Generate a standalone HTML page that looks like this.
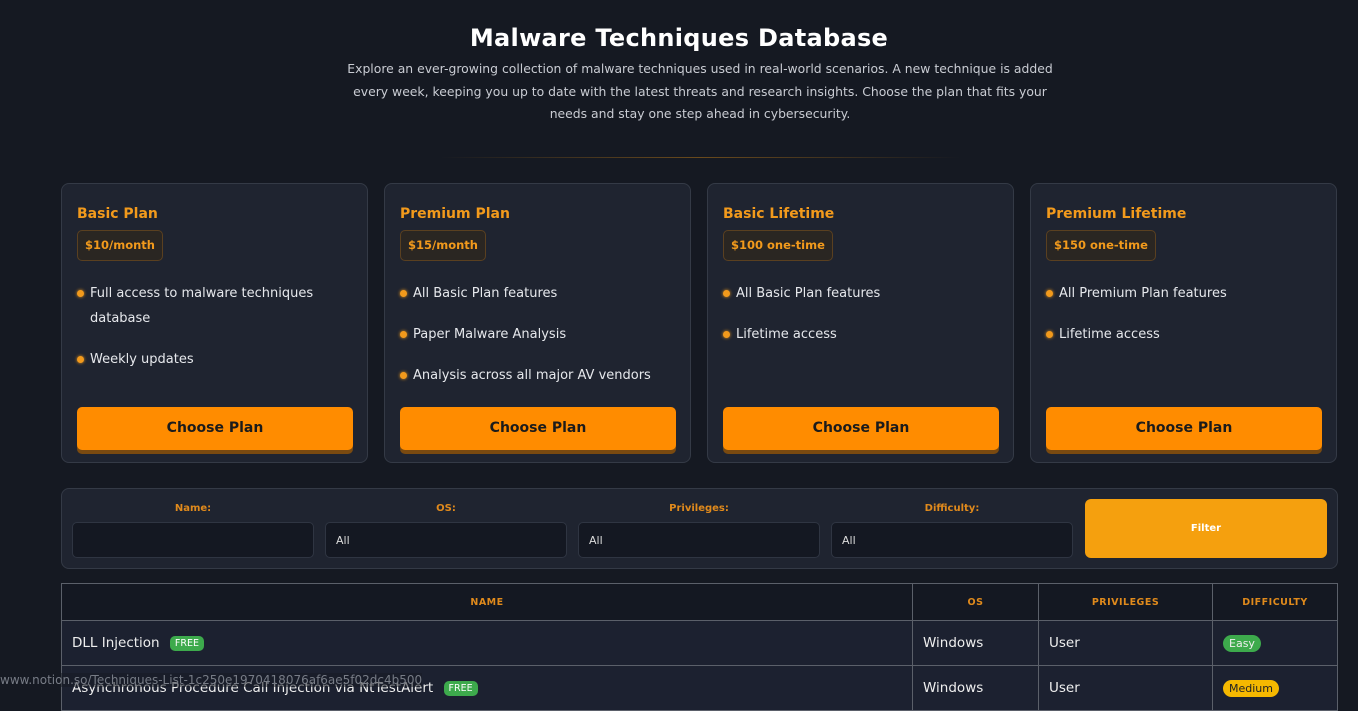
<!DOCTYPE html>
<html><head><meta charset="utf-8"><style>
*{box-sizing:border-box;margin:0;padding:0}
body{width:1358px;height:690px;overflow:hidden;background:#151922;font-family:"DejaVu Sans","Liberation Sans",sans-serif;color:#e6e8ec;position:relative}
h1{position:absolute;top:24px;left:0;width:1358px;text-align:center;font-size:24px;font-weight:bold;color:#fff;letter-spacing:0.3px}
.intro{position:absolute;top:58px;left:345px;width:710px;text-align:center;font-size:12.4px;line-height:22.5px;color:#c9ccd3}
.hr{position:absolute;top:157px;left:440px;width:520px;height:1px;background:linear-gradient(90deg,transparent,#6a4a1c,transparent)}
.card{position:absolute;top:183px;width:307px;height:280px;background:#1f2430;border:1px solid #343a46;border-radius:8px}
.card .t{position:absolute;left:15px;top:22px;font-size:14px;font-weight:bold;color:#f29a1c}
.card .p{position:absolute;left:15px;top:46px;height:31px;padding:0 7px;line-height:29px;border:1px solid #5a4020;background:#2a2622;border-radius:5px;font-size:11.5px;font-weight:bold;color:#f29a1c}
.card ul{position:absolute;left:15px;top:97px;width:280px;list-style:none}
.card li{position:relative;padding-left:13px;font-size:13px;line-height:25px;margin-bottom:16px}
.card li:before{content:"";position:absolute;left:0;top:9px;width:7px;height:7px;border-radius:50%;background:#f29a1c;box-shadow:0 0 3px #f29a1c}
.card .b{position:absolute;left:15px;top:223px;width:276px;height:43px;background:#ff8c00;border-radius:5px;box-shadow:0 4px 0 #7a4a10;text-align:center;line-height:43px;font-size:14px;font-weight:bold;color:#1b1b1b}
.fp{position:absolute;left:61px;top:488px;width:1277px;height:81px;background:#1f2430;border:1px solid #343a46;border-radius:8px}
.lab{position:absolute;top:14px;font-size:10px;font-weight:bold;color:#e08a1c;text-align:center;width:242px}
.in{position:absolute;top:33px;width:242px;height:36px;background:#141822;border:1px solid #2f3542;border-radius:5px;font-size:11px;color:#ddd;padding:10px 10px;line-height:16px}
.fb{position:absolute;left:1023px;top:10px;width:242px;height:59px;background:#f5a00e;border-radius:6px;text-align:center;line-height:59px;font-size:10px;font-weight:bold;color:#fff}
table{position:absolute;left:61px;top:583px;width:1277px;border-collapse:collapse;border:1px solid #5b606a}
th{height:37px;font-size:9.5px;font-weight:bold;color:#e08a1c;letter-spacing:0.5px;background:#141822;border:1px solid #5b606a}
td{height:45px;font-size:13.5px;padding-left:10px;background:#1c2130;border:1px solid #5b606a;color:#eee}
.tag{display:inline-block;font-size:9.5px;background:#3daa4c;color:#fff;border-radius:5px;padding:2px 5px;margin-left:6px;vertical-align:1px}
.pill{display:inline-block;font-size:11px;background:#3daa4c;color:#eee;border-radius:9px;padding:2px 6px}
.url{position:absolute;left:0;top:673px;font-size:12px;color:#777c86;background:rgba(21,25,34,0.5)}
</style></head><body>
<h1>Malware Techniques Database</h1>
<div class="intro">Explore an ever-growing collection of malware techniques used in real-world scenarios. A new technique is added every week, keeping you up to date with the latest threats and research insights. Choose the plan that fits your needs and stay one step ahead in cybersecurity.</div>
<div class="hr"></div>

<div class="card" style="left:61px"><div class="t">Basic Plan</div><div class="p">$10/month</div>
<ul><li>Full access to malware techniques database</li><li>Weekly updates</li></ul><div class="b">Choose Plan</div></div>
<div class="card" style="left:384px"><div class="t">Premium Plan</div><div class="p">$15/month</div>
<ul><li>All Basic Plan features</li><li>Paper Malware Analysis</li><li>Analysis across all major AV vendors</li></ul><div class="b">Choose Plan</div></div>
<div class="card" style="left:707px"><div class="t">Basic Lifetime</div><div class="p">$100 one-time</div>
<ul><li>All Basic Plan features</li><li>Lifetime access</li></ul><div class="b">Choose Plan</div></div>
<div class="card" style="left:1030px"><div class="t">Premium Lifetime</div><div class="p">$150 one-time</div>
<ul><li>All Premium Plan features</li><li>Lifetime access</li></ul><div class="b">Choose Plan</div></div>

<div class="fp">
<div class="lab" style="left:10px">Name:</div><div class="in" style="left:10px"></div>
<div class="lab" style="left:263px">OS:</div><div class="in" style="left:263px">All</div>
<div class="lab" style="left:516px">Privileges:</div><div class="in" style="left:516px">All</div>
<div class="lab" style="left:769px">Difficulty:</div><div class="in" style="left:769px">All</div>
<div class="fb">Filter</div>
</div>

<table>
<tr><th style="width:851px">NAME</th><th style="width:126px">OS</th><th style="width:174px">PRIVILEGES</th><th>DIFFICULTY</th></tr>
<tr><td>DLL Injection <span class="tag">FREE</span></td><td>Windows</td><td>User</td><td><span class="pill">Easy</span></td></tr>
<tr><td>Asynchronous Procedure Call Injection via NtTestAlert <span class="tag">FREE</span></td><td>Windows</td><td>User</td><td><span class="pill" style="background:#f5b800;color:#222">Medium</span></td></tr>
</table>
<div class="url">www.notion.so/Techniques-List-1c250e1970418076af6ae5f02dc4b500</div>
</body></html>
